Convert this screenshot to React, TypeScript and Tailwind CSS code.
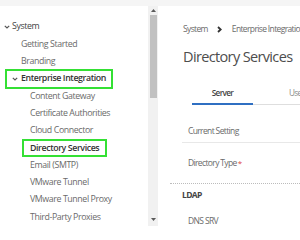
import type { ReactNode } from 'react'

const font = "font-['Open_Sans','Noto_Sans',sans-serif]"

function Chevron({ className = '' }: { className?: string }) {
  return (
    <svg width="6" height="4" viewBox="0 0 6 4" className={`flex-none ${className}`} aria-hidden>
      <polyline points="0.8,0.8 3,3 5.2,0.8" fill="none" stroke="#555" strokeWidth="1.2" />
    </svg>
  )
}

function NavItem({ children, indent }: { children: ReactNode; indent: string }) {
  return <div className={`h-[17.3px] leading-[17.3px] whitespace-nowrap text-[#6a6a6a] ${indent}`}>{children}</div>
}

function Scrollbar() {
  return (
    <div className="flex w-[10px] flex-none flex-col items-center bg-[#f1f1f1]">
      <svg width="5" height="3" viewBox="0 0 5 3" className="mt-[3px]" aria-hidden>
        <polygon points="0,3 2.5,0 5,3" fill="#5a5a5a" />
      </svg>
      <div className="mt-[3px] h-[83px] w-[7px] bg-[#c1c1c1]" />
      <div className="flex-1" />
      <svg width="5" height="3" viewBox="0 0 5 3" className="mb-[5px]" aria-hidden>
        <polygon points="0,0 2.5,3 5,0" fill="#5a5a5a" />
      </svg>
    </div>
  )
}

export default function App() {
  return (
    <div className={`h-[240px] w-[300px] overflow-hidden bg-white ${font}`}>
      <div className="h-[6px] bg-[#f5f5f5]" />
      <div className="flex">
        <aside className="flex h-[220px] w-[158px] flex-none">
          <nav className="w-[148px] flex-none pt-[12.4px] text-[8.8px] tracking-[-0.045em]">
            <div className="flex h-[17.3px] items-center pl-[4px] text-[#444]">
              <Chevron />
              <span className="ml-[2px] leading-[17.3px]">System</span>
            </div>
            <NavItem indent="pl-[21px]">Getting Started</NavItem>
            <NavItem indent="pl-[21px]">Branding</NavItem>
            <div className="flex h-[17.3px] items-center pl-[7px]">
              <span className="flex h-[16px] w-[104px] items-center whitespace-nowrap pl-[5px] font-semibold text-[#333] ring-2 ring-[#34e034]">
                <Chevron />
                <span className="ml-[3px]">Enterprise Integration</span>
              </span>
            </div>
            <NavItem indent="pl-[30px]">Content Gateway</NavItem>
            <NavItem indent="pl-[30px]">Certificate Authorities</NavItem>
            <NavItem indent="pl-[30px]">Cloud Connector</NavItem>
            <div className="flex h-[17.3px] items-center pl-[24px]">
              <span className="flex h-[14px] w-[81px] items-center whitespace-nowrap pl-[6px] font-semibold text-[#333] ring-2 ring-[#34e034]">
                Directory Services
              </span>
            </div>
            <NavItem indent="pl-[30px]">Email (SMTP)</NavItem>
            <NavItem indent="pl-[30px]">VMware Tunnel</NavItem>
            <NavItem indent="pl-[30px]">VMware Tunnel Proxy</NavItem>
            <NavItem indent="pl-[30px]">Third-Party Proxies</NavItem>
          </nav>
          <Scrollbar />
        </aside>

        <main className="min-w-0 flex-1 pl-[12px] pt-[17px] tracking-[-0.04em]">
          <div className="flex items-center whitespace-nowrap pl-[13px] text-[8.5px] leading-[12px] text-[#6b6b6b]">
            <span className="flex-none">System</span>
            <svg width="5" height="7" viewBox="0 0 5 7" className="ml-[9px] flex-none" aria-hidden>
              <polyline points="1,1 3.7,3.5 1,6" fill="none" stroke="#333" strokeWidth="1.8" />
            </svg>
            <span className="ml-[10px] flex-none">Enterprise Integration</span>
          </div>

          <h1 className="mt-[12px] whitespace-nowrap pl-[13px] text-[14.5px] leading-[20px] text-[#4d4d4d]">
            Directory Services
          </h1>

          <div className="ml-[22px] mt-[17px] flex whitespace-nowrap border-b border-[#dedede] text-[8.2px]">
            <span className="-mb-px h-[21px] w-[61px] flex-none border-b-2 border-[#2f6fc2] text-center font-semibold leading-[18px] text-[#444]">
              Server
            </span>
            <span className="ml-[36px] flex-none leading-[18px] text-[#8a8a8a]">Users</span>
          </div>

          <div className="ml-[12px] text-[8.5px] leading-[12px] text-[#6b6b6b]">
            <div className="border-b border-[#e8e8e8] pb-[5px] pl-[6px] pt-[20px]">Current Setting</div>
            <div className="pb-[14px] pl-[6px] pt-[14px]">
              Directory Type<span className="ml-[1px] align-top text-[8px] text-[#e0443b]">*</span>
            </div>
          </div>

          <div className="border-t border-dotted border-[#bcbcbc]" />

          <div className="ml-[12px] text-[8.5px] leading-[12px]">
            <div className="pt-[5px] font-bold text-[#444]">LDAP</div>
            <div className="mt-[14px] pl-[6px] text-[#6b6b6b]">DNS SRV</div>
          </div>
        </main>
      </div>
    </div>
  )
}
